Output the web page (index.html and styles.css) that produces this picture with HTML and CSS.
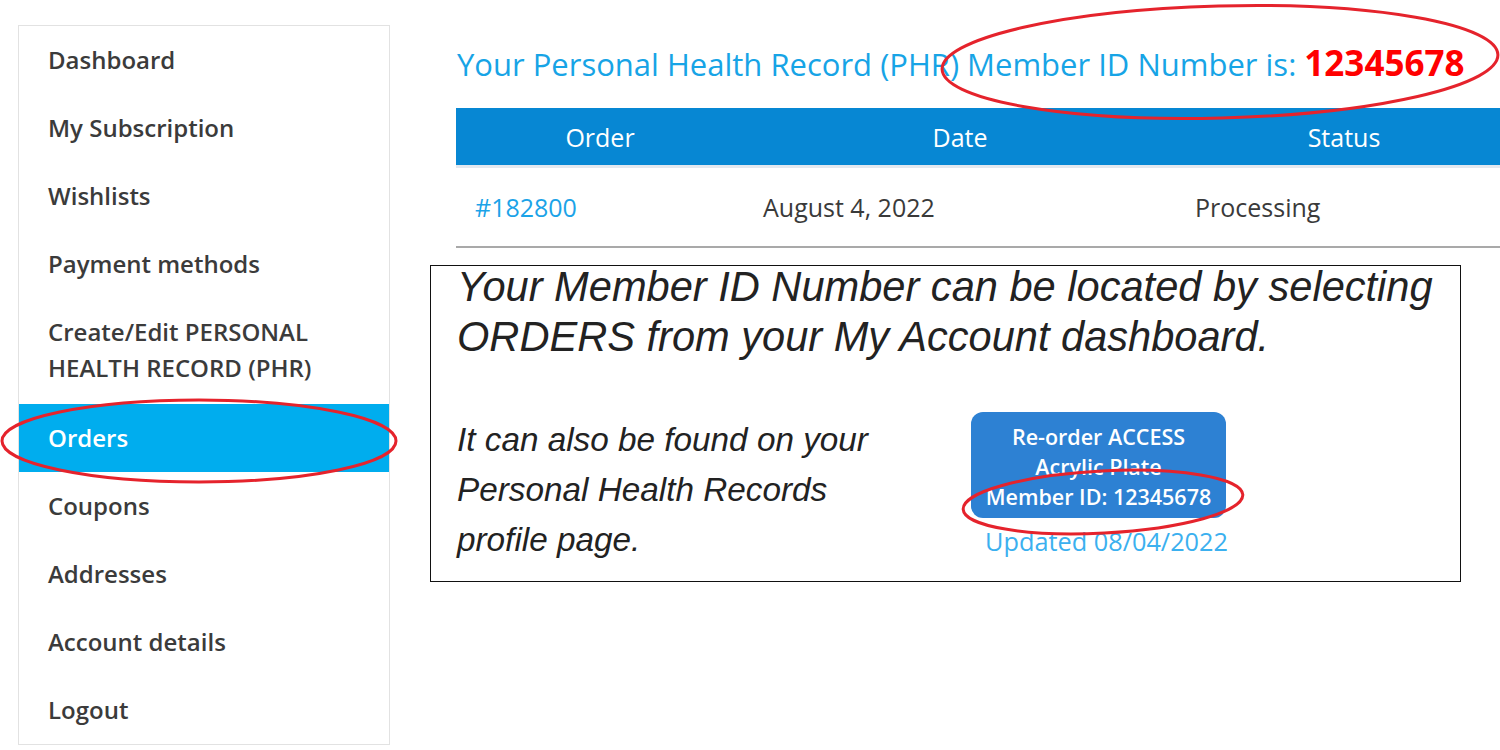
FILE: index.html
```html
<!DOCTYPE html>
<html lang="en">
<head>
<meta charset="utf-8">
<title>My Account - Orders</title>
<link rel="stylesheet" href="styles.css">
</head>
<body>
<div class="page">
  <nav class="sidebar">
    <a class="nav-item" href="#">Dashboard</a>
    <a class="nav-item" href="#">My Subscription</a>
    <a class="nav-item" href="#">Wishlists</a>
    <a class="nav-item" href="#">Payment methods</a>
    <a class="nav-item" href="#">Create/Edit PERSONAL<br>HEALTH RECORD (PHR)</a>
    <a class="nav-item active" href="#">Orders</a>
    <a class="nav-item" href="#">Coupons</a>
    <a class="nav-item" href="#">Addresses</a>
    <a class="nav-item" href="#">Account details</a>
    <a class="nav-item" href="#">Logout</a>
  </nav>
  <main class="main">
    <h1 class="phr-heading">Your Personal Health Record (PHR) Member ID Number is: <span class="member-id">12345678</span></h1>
    <table class="orders">
      <thead>
        <tr><th class="col-order">Order</th><th class="col-date">Date</th><th class="col-status">Status</th></tr>
      </thead>
      <tbody>
        <tr><td><a href="#" class="order-link">#182800</a></td><td>August 4, 2022</td><td>Processing</td></tr>
      </tbody>
    </table>
    <section class="note">
      <p class="note-lead">Your Member ID Number can be located by selecting ORDERS from your My Account dashboard.</p>
      <div class="note-row">
        <p class="note-sub">It can also be found on your<br>Personal Health Records<br>profile page.</p>
        <div class="reorder">
          <a class="reorder-btn" href="#">Re-order ACCESS<br>Acrylic Plate<br>Member ID: 12345678</a>
          <div class="updated">Updated 08/04/2022</div>
        </div>
      </div>
    </section>
  </main>
</div>
<svg class="annotations" width="1500" height="750" viewBox="0 0 1500 750" aria-hidden="true">
  <ellipse cx="1220" cy="62" rx="278" ry="56" transform="rotate(-1.5 1220 62)"/>
  <ellipse cx="199" cy="441" rx="197" ry="41"/>
  <ellipse cx="1103" cy="502" rx="140" ry="31" transform="rotate(-3 1103 502)"/>
</svg>
</body>
</html>
```
FILE: styles.css
```css
html, body {
  margin: 0;
  padding: 0;
  width: 1500px;
  height: 750px;
  overflow: hidden;
  background: #ffffff;
  font-family: "Open Sans", "Liberation Sans", sans-serif;
}

.page {
  display: flex;
  align-items: flex-start;
  width: 1500px;
  height: 750px;
  overflow: hidden;
}

.sidebar {
  display: flex;
  flex-direction: column;
  margin: 25px 0 0 18px;
  width: 370px;
  height: 718px;
  border: 1px solid #e2e2e2;
  flex: none;
}

.nav-item {
  display: block;
  padding: 16px 10px 16px 29px;
  font-size: 24px;
  line-height: 36px;
  font-weight: 600;
  color: #3b3b3b;
  text-decoration: none;
}

.nav-item.active {
  background: #00adee;
  color: #ffffff;
  margin-top: 2px;
}

.main {
  flex: 1;
  margin-left: 40px;
  padding-top: 42px;
  overflow: hidden;
  min-width: 0;
}

.phr-heading {
  margin: 0 0 24px 27px;
  height: 42px;
  font-size: 31px;
  line-height: 42px;
  font-weight: 400;
  color: #17a4e6;
  white-space: nowrap;
}

.member-id {
  color: #ff0000;
  font-weight: 700;
  font-size: 35px;
}

.orders {
  margin-left: 26px;
  width: 1056px;
  border-collapse: collapse;
  table-layout: fixed;
  font-size: 25px;
  line-height: 34px;
}

.col-order { width: 288px; }
.col-date { width: 432px; }
.col-status { width: 336px; }

.orders th {
  height: 57px;
  padding: 0;
  background: #0787d3;
  color: #ffffff;
  font-weight: 400;
  text-align: center;
  border-bottom: 3px solid #e3e8ef;
}

.orders td {
  height: 78px;
  padding: 0 0 0 19px;
  color: #3a3a3a;
  border-bottom: 2px solid #a9a9a9;
}

.order-link {
  color: #1ba3e8;
  text-decoration: none;
}

.note {
  margin-top: 17px;
  width: 1031px;
  border: 1px solid #111111;
  padding: 0 0 16px 26px;
  box-sizing: border-box;
  font-family: "Liberation Sans", Arial, sans-serif;
  font-style: italic;
  color: #222222;
}

.note-lead {
  margin: -4px 0 0 0;
  font-size: 41.6px;
  line-height: 50px;
}

.note-row {
  display: flex;
  align-items: flex-start;
  margin-top: 53px;
}

.note-sub {
  margin: 0;
  width: 512px;
  font-size: 33.3px;
  line-height: 50px;
}

.reorder {
  display: flex;
  flex-direction: column;
  align-items: center;
  margin-top: -3px;
}

.reorder-btn {
  display: block;
  width: 255px;
  box-sizing: border-box;
  padding: 10px 0 6px;
  background: #2d81d3;
  border-radius: 12px;
  color: #ffffff;
  text-align: center;
  font-family: "Open Sans", "Liberation Sans", sans-serif;
  font-style: normal;
  font-weight: 600;
  font-size: 21.5px;
  line-height: 30px;
  text-decoration: none;
  white-space: nowrap;
}

.updated {
  margin: 5px 0 0 16px;
  font-family: "Open Sans", "Liberation Sans", sans-serif;
  font-style: normal;
  font-size: 25.3px;
  line-height: 36px;
  color: #3bb0ef;
  white-space: nowrap;
}

.annotations {
  position: absolute;
  left: 0;
  top: 0;
  pointer-events: none;
}

.annotations ellipse {
  fill: none;
  stroke: #e5232c;
  stroke-width: 3;
}
```
